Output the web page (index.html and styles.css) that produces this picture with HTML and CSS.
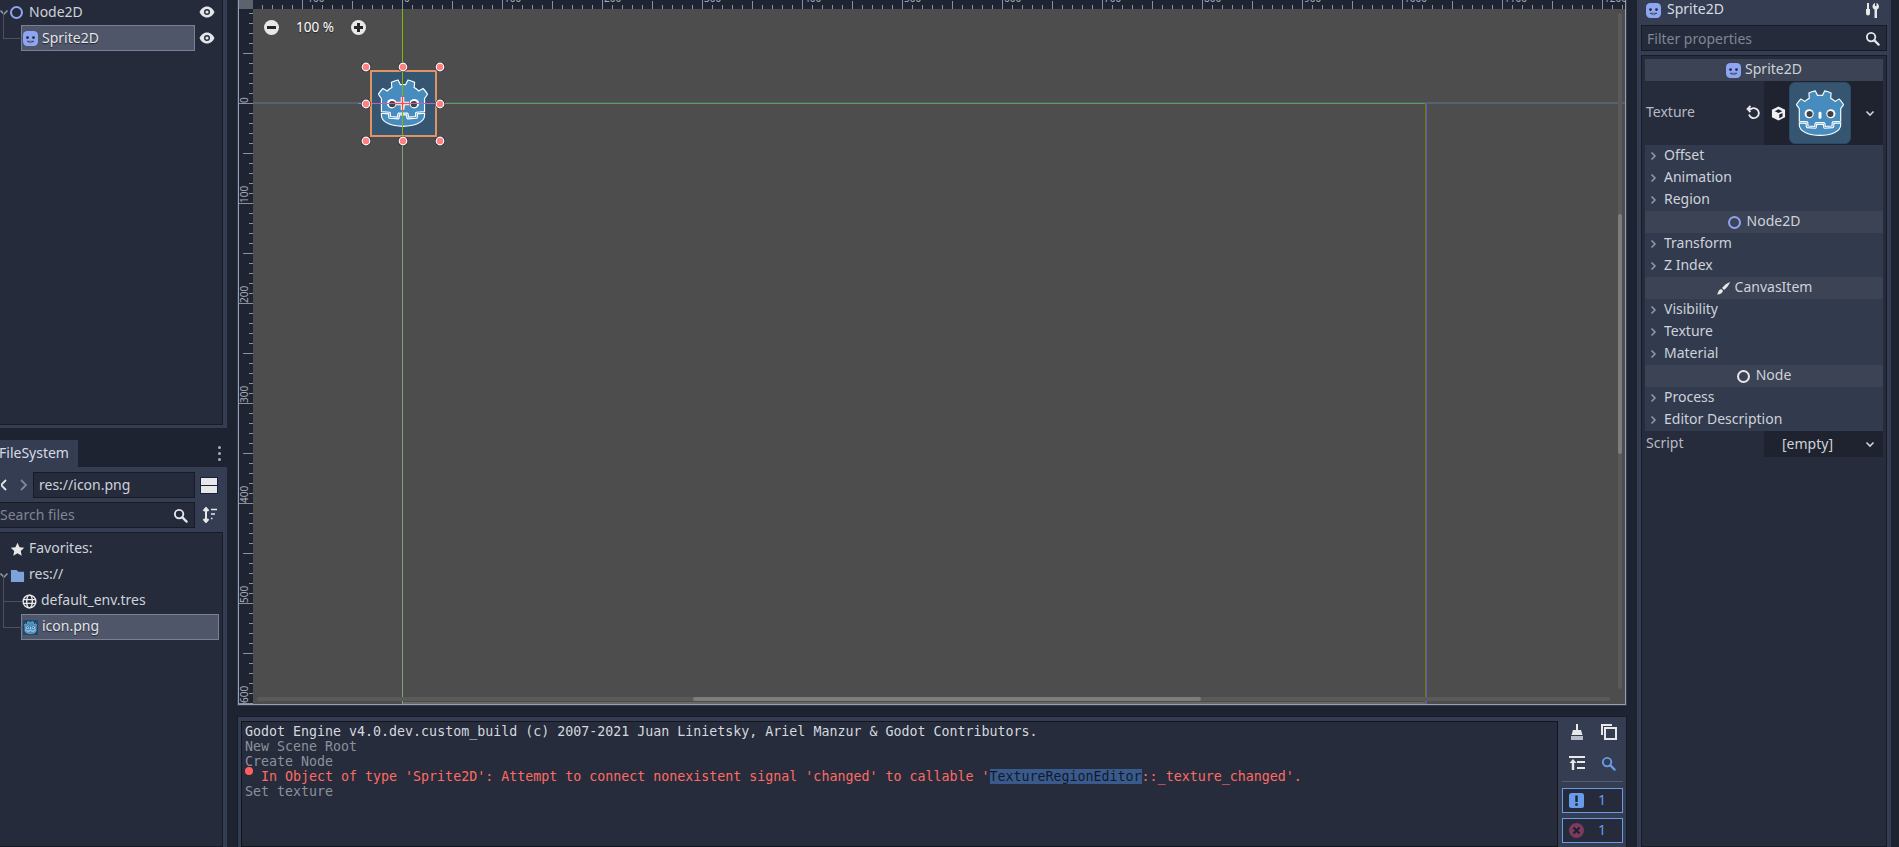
FILE: index.html
```html
<!DOCTYPE html>
<html lang="en">
<head>
    <meta charset="UTF-8">
    <title>Godot Engine</title>
    <link rel="stylesheet" href="styles.css">
</head>
<body>
    <svg class="defs" width="0" height="0">
        <symbol id="godot" viewBox="40 90 944 844">
            <path d="M105 673v33q407 354 814 0v-33z" fill="#478cbf"/>
            <path d="m105 673 152 14q12 1 15 14l4 67 132 10 8-61q2-11 15-15h162q13 4 15 15l8 61 132-10 4-67q3-13 15-14l152-14V427q30-39 56-81-35-59-83-108-43 20-82 47-40-37-88-64 7-51 8-102-59-28-123-42-26 43-46 89-49-7-98 0-20-46-46-89-64 14-123 42 1 51 8 102-48 27-88 64-39-27-82-47-48 49-83 108 26 42 56 81zm0 33v39c0 276 813 276 814 0v-39l-134 12-5 69q-2 10-14 13l-162 11q-12 0-16-11l-10-65H446l-10 65q-4 11-16 11l-162-11q-12-3-14-13l-5-69z" fill="#478cbf" stroke="#fff" stroke-width="22"/>
            <path d="M483 600c0 34 58 34 58 0v-86c0-34-58-34-58 0z" fill="#fff"/>
            <circle cx="725" cy="526" r="90" fill="#fff"/>
            <circle cx="299" cy="526" r="90" fill="#fff"/>
            <circle cx="307" cy="532" r="60" fill="#414042"/>
            <circle cx="717" cy="532" r="60" fill="#414042"/>
        </symbol>
        <symbol id="sprite" viewBox="0 0 16 16">
            <rect width="16" height="16" rx="4.500" fill="#8da5f3"/>
            <circle cx="4.800" cy="7" r="1.500" fill="#252b3b"/>
            <circle cx="11.200" cy="7" r="1.500" fill="#252b3b"/>
            <path d="M4.500 11q3.500 3 7 0z" fill="#fff" stroke="#252b3b" stroke-width=".8"/>
        </symbol>
        <symbol id="eye" viewBox="0 0 16 16">
            <path d="M8 2.500C4.500 2.500 1.800 5 .5 8c1.300 3 4 5.500 7.500 5.500s6.200-2.500 7.500-5.500C14.200 5 11.500 2.500 8 2.500zm0 2.500a3 3 0 1 1 0 6 3 3 0 0 1 0-6z" fill="#e4e6ea"/>
            <circle cx="8" cy="8" r="1.600" fill="#e4e6ea"/>
        </symbol>
        <symbol id="search" viewBox="0 0 16 16">
            <circle cx="6.500" cy="6.500" r="4.500" fill="none" stroke="currentColor" stroke-width="2"/>
            <path d="M10 10l4.500 4.500" stroke="currentColor" stroke-width="2.400" stroke-linecap="round"/>
        </symbol>
        <symbol id="chev-down" viewBox="0 0 12 12">
            <path d="M2.500 4.500L6 8l3.500-3.500" fill="none" stroke="currentColor" stroke-width="1.600"/>
        </symbol>
        <symbol id="chev-right" viewBox="0 0 12 12">
            <path d="M4.500 2.500L8 6l-3.500 3.500" fill="none" stroke="currentColor" stroke-width="1.600"/>
        </symbol>
    </svg>

    <div class="app">
        <!-- left docks -->
        <div class="left-dock">
            <div class="scene-dock">
                <div class="tree scene-tree">
                    <div class="row">
                        <div class="row-main">
                            <svg class="chev" width="12" height="12"><use href="#chev-down"/></svg>
                            <i class="ring ring-blue"></i>
                            <span>Node2D</span>
                        </div>
                        <svg class="eye" width="16" height="16"><use href="#eye"/></svg>
                    </div>
                    <div class="row child">
                        <div class="row-main selected">
                            <svg width="15" height="15"><use href="#sprite"/></svg>
                            <span>Sprite2D</span>
                        </div>
                        <svg class="eye" width="16" height="16"><use href="#eye"/></svg>
                    </div>
                </div>
            </div>

            <div class="tab-bar">
                <div class="tab">FileSystem</div>
                <div class="kebab"><i></i><i></i><i></i></div>
            </div>
            <div class="fs-dock">
                <div class="fs-bar">
                    <svg class="nav" width="32" height="16" viewBox="0 0 32 16">
                        <path d="M5 3L0 8l5 5" fill="none" stroke="#e4e6ea" stroke-width="1.800"/>
                        <path d="M20 3l5 5-5 5" fill="none" stroke="#7f8695" stroke-width="1.800"/>
                    </svg>
                    <div class="field path-field"><span>res://icon.png</span></div>
                    <svg class="tool" width="18" height="17" viewBox="0 0 18 17">
                        <rect width="18" height="17" fill="#14233f"/>
                        <rect x="1" y="1" width="16" height="7" fill="#e8e8e8"/>
                        <rect x="1" y="9" width="16" height="7" fill="#e8e8e8"/>
                    </svg>
                </div>
                <div class="fs-bar">
                    <div class="field search-field">
                        <span>Search files</span>
                        <svg width="15" height="15" class="search-icon"><use href="#search"/></svg>
                    </div>
                    <svg class="tool sort" width="16" height="16" viewBox="0 0 16 16">
                        <path d="M4 1v14M1.500 4L4 1l2.500 3M1.500 12L4 15l2.500-3" fill="none" stroke="#e8e8e8" stroke-width="2"/>
                        <path d="M9 2.500h6M9 7h4M9 11.500h1.500" stroke="#e8e8e8" stroke-width="1.600"/>
                    </svg>
                </div>
                <div class="tree fs-tree">
                    <div class="row">
                        <div class="row-main indent">
                            <svg width="15" height="15" viewBox="0 0 16 16"><path d="M8 .8l2.200 4.700 5 .6-3.700 3.500 1 5L8 12.100l-4.500 2.500 1-5L.8 6.100l5-.6z" fill="#e8e8e8"/></svg>
                            <span>Favorites:</span>
                        </div>
                    </div>
                    <div class="row">
                        <div class="row-main">
                            <svg class="chev" width="12" height="12"><use href="#chev-down"/></svg>
                            <svg width="15" height="15" viewBox="0 0 16 16"><path d="M1 2h6l2 2h6v11H1z" fill="#7ea2dc"/></svg>
                            <span>res://</span>
                        </div>
                    </div>
                    <div class="row child">
                        <div class="row-main wide">
                            <svg width="15" height="15" viewBox="0 0 16 16" fill="none" stroke="#e8e8e8" stroke-width="1.500"><circle cx="8" cy="8" r="6.800"/><ellipse cx="8" cy="8" rx="3" ry="6.800"/><path d="M1.500 6h13M1.500 10h13"/></svg>
                            <span>default_env.tres</span>
                        </div>
                    </div>
                    <div class="row child">
                        <div class="row-main wide selected">
                            <svg width="15" height="15" viewBox="0 0 15 15"><rect width="15" height="15" fill="#1b4a70"/><use href="#godot" x="1" y="1" width="13" height="13"/></svg>
                            <span>icon.png</span>
                        </div>
                    </div>
                </div>
            </div>
        </div>

        <!-- viewport and output -->
        <div class="center">
            <div class="viewport">
                <div class="ruler-top">
                    <div class="ruler-corner"></div>
                    <div class="ruler-h">
                        <span style="left:51px">-100</span>
                        <span style="left:151px">0</span>
                        <span style="left:251px">100</span>
                        <span style="left:351px">200</span>
                        <span style="left:451px">300</span>
                        <span style="left:551px">400</span>
                        <span style="left:651px">500</span>
                        <span style="left:751px">600</span>
                        <span style="left:851px">700</span>
                        <span style="left:951px">800</span>
                        <span style="left:1051px">900</span>
                        <span style="left:1151px">1000</span>
                        <span style="left:1251px">1100</span>
                        <span style="left:1351px">1200</span>
                    </div>
                </div>
                <div class="view-body">
                    <div class="ruler-v">
                        <span style="top:94px">0</span>
                        <span style="top:194px">100</span>
                        <span style="top:294px">200</span>
                        <span style="top:394px">300</span>
                        <span style="top:494px">400</span>
                        <span style="top:594px">500</span>
                        <span style="top:694px">600</span>
                    </div>
                    <div class="canvas">
                        <i class="line h-teal"></i>
                        <i class="line h-red"></i>
                        <i class="line h-green"></i>
                        <i class="line h-violet"></i>
                        <i class="line v-top"></i>
                        <i class="line v-bottom"></i>
                        <i class="line frame-right-a"></i>
                        <i class="line frame-right-b"></i>
                        <i class="line frame-bottom-a"></i>
                        <i class="line frame-bottom-b"></i>

                        <svg class="sprite-sel" width="90" height="90" viewBox="0 0 90 90">
                            <rect x="13.500" y="13.500" width="64" height="64" rx="4" fill="#355570"/>
                            <use href="#godot" x="20" y="21" width="50" height="48"/>
                            <path d="M44.500 0v90" stroke="#8bb300" stroke-width="1"/>
                            <path d="M0 45.500h90" stroke="#c060c0" stroke-width="1"/>
                            <rect x="13" y="13" width="65" height="65" fill="none" stroke="#e09464" stroke-width="2"/>
                            <path d="M38 45.500h13M44.500 39v13" stroke="#fff" stroke-width="3.500"/>
                            <path d="M37 45.500h15M44.500 38v15" stroke="#f0504a" stroke-width="1.500"/>
                            <g fill="#20242f">
                                <circle cx="8" cy="9" r="5"/><circle cx="45" cy="9" r="5"/><circle cx="82" cy="9" r="5"/>
                                <circle cx="8" cy="46" r="5"/><circle cx="82" cy="46" r="5"/>
                                <circle cx="8" cy="83" r="5"/><circle cx="45" cy="83" r="5"/><circle cx="82" cy="83" r="5"/>
                            </g>
                            <g fill="#ff8080" stroke="#fff" stroke-width="1.200">
                                <circle cx="8" cy="9" r="3.800"/><circle cx="45" cy="9" r="3.800"/><circle cx="82" cy="9" r="3.800"/>
                                <circle cx="8" cy="46" r="3.800"/><circle cx="82" cy="46" r="3.800"/>
                                <circle cx="8" cy="83" r="3.800"/><circle cx="45" cy="83" r="3.800"/><circle cx="82" cy="83" r="3.800"/>
                            </g>
                        </svg>

                        <div class="zoom-bar">
                            <span class="zoom-btn minus"></span>
                            <span class="zoom-label">100 %</span>
                            <span class="zoom-btn plus"></span>
                        </div>
                        <i class="scroll-v"><b></b></i>
                        <i class="scroll-h"><b></b></i>
                    </div>
                </div>
            </div>

            <div class="output">
                <div class="log">
                    <div>Godot Engine v4.0.dev.custom_build (c) 2007-2021 Juan Linietsky, Ariel Manzur &amp; Godot Contributors.</div>
                    <div class="dim">New Scene Root</div>
                    <div class="dim">Create Node</div>
                    <div class="err"><i class="err-dot"></i>In Object of type 'Sprite2D': Attempt to connect nonexistent signal 'changed' to callable '<span class="sel">TextureRegionEditor</span>::_texture_changed'.</div>
                    <div class="dim">Set texture</div>
                </div>
                <div class="log-side">
                    <div class="log-tools">
                        <svg width="18" height="18" viewBox="0 0 18 18"><path d="M8 1h2v6H8z" fill="#e8e8e8"/><path d="M5 7h8l1.500 5h-11z" fill="#e8e8e8"/><rect x="3" y="13" width="12" height="4" fill="#b8bcc6"/></svg>
                        <svg width="18" height="18" viewBox="0 0 18 18" fill="none" stroke="#e8e8e8" stroke-width="2"><path d="M2 12V2h10"/><rect x="5" y="5" width="11" height="11"/></svg>
                        <svg width="18" height="18" viewBox="0 0 18 18" fill="#e8e8e8"><rect x="1" y="2" width="16" height="2"/><rect x="9" y="7" width="8" height="2"/><rect x="9" y="13" width="8" height="2"/><path d="M5 5l3.500 4H6.200v7H3.800V9H1.500z"/></svg>
                        <svg width="15" height="15" class="log-search"><use href="#search"/></svg>
                    </div>
                    <div class="side-sep"></div>
                    <div class="count-btn">
                        <svg width="15" height="15" viewBox="0 0 15 15"><rect width="15" height="15" rx="2.500" fill="#699ce8"/><rect x="6.300" y="2.500" width="2.400" height="6.500" fill="#1d2230"/><rect x="6.300" y="10.300" width="2.400" height="2.400" fill="#1d2230"/></svg>
                        <span>1</span>
                    </div>
                    <div class="count-btn">
                        <svg width="15" height="15" viewBox="0 0 15 15"><circle cx="7.500" cy="7.500" r="7.500" fill="#7d3a5c"/><path d="M4.500 4.500l6 6M10.500 4.500l-6 6" stroke="#1d2230" stroke-width="2.200"/></svg>
                        <span>1</span>
                    </div>
                </div>
            </div>
        </div>

        <!-- inspector -->
        <div class="inspector">
            <div class="insp-head">
                <svg width="15" height="15"><use href="#sprite"/></svg>
                <span class="insp-title">Sprite2D</span>
                <svg class="insp-tools" width="14" height="15" viewBox="0 0 14 15" fill="#e8e8e8"><path d="M2 0h2v6h1v4.500a2 2 0 0 1-4 0V6h1z"/><path d="M10 0v3h1.500V0C13 .5 14 2 14 3.500S13 6 12 6.500V15H9.500V6.500C8.500 6 7.500 5 7.500 3.500S8.500.5 10 0z"/></svg>
            </div>
            <div class="field filter-field">
                <span>Filter properties</span>
                <svg width="15" height="15" class="search-icon"><use href="#search"/></svg>
            </div>
            <div class="props">
                <div class="section">
                    <svg width="15" height="15"><use href="#sprite"/></svg><span>Sprite2D</span>
                </div>
                <div class="prop texture-prop">
                    <div class="prop-label">
                        <span>Texture</span>
                        <svg width="16" height="16" viewBox="0 0 16 16" fill="none" stroke="#e8e8e8" stroke-width="1.800"><path d="M4 9.500a5 5 0 1 0 2-5.500H3"/><path d="M5.500 1L2.500 4l3 3"/></svg>
                    </div>
                    <div class="prop-value">
                        <svg width="15" height="15" viewBox="0 0 16 16"><path d="M8 .5l7 3.500v8l-7 3.500L1 12V4z" fill="#f0f0f0"/><path d="M8 3.500L4 5.500l4 2 4-2zM8.800 9v4l3.500-1.800V7.500z" fill="#1f2330"/></svg>
                        <div class="tex-preview"><svg width="48" height="46"><use href="#godot"/></svg></div>
                        <svg class="chev-value" width="12" height="12"><use href="#chev-down"/></svg>
                    </div>
                </div>
                <div class="group"><svg width="12" height="12"><use href="#chev-right"/></svg><span>Offset</span></div>
                <div class="group"><svg width="12" height="12"><use href="#chev-right"/></svg><span>Animation</span></div>
                <div class="group"><svg width="12" height="12"><use href="#chev-right"/></svg><span>Region</span></div>
                <div class="section ring-section"><i class="ring ring-blue"></i><span>Node2D</span></div>
                <div class="group"><svg width="12" height="12"><use href="#chev-right"/></svg><span>Transform</span></div>
                <div class="group"><svg width="12" height="12"><use href="#chev-right"/></svg><span>Z Index</span></div>
                <div class="section">
                    <svg width="15" height="15" viewBox="0 0 16 16" fill="#e8e8e8"><path d="M15 1c-3 1-6 3.500-8.500 6.500l2 2C11.500 7 14 4 15 1z"/><path d="M5.500 8.500L7.500 10.500c-.5 2.500-3 4-6.500 4 1.500-1.500 1-5 4.500-6z"/></svg><span>CanvasItem</span>
                </div>
                <div class="group"><svg width="12" height="12"><use href="#chev-right"/></svg><span>Visibility</span></div>
                <div class="group"><svg width="12" height="12"><use href="#chev-right"/></svg><span>Texture</span></div>
                <div class="group"><svg width="12" height="12"><use href="#chev-right"/></svg><span>Material</span></div>
                <div class="section ring-section"><i class="ring"></i><span>Node</span></div>
                <div class="group"><svg width="12" height="12"><use href="#chev-right"/></svg><span>Process</span></div>
                <div class="group"><svg width="12" height="12"><use href="#chev-right"/></svg><span>Editor Description</span></div>
                <div class="prop script-prop">
                    <div class="prop-label"><span>Script</span></div>
                    <div class="prop-value">
                        <span class="empty">[empty]</span>
                        <svg class="chev-value" width="12" height="12"><use href="#chev-down"/></svg>
                    </div>
                </div>
            </div>
        </div>
    </div>
</body>
</html>
```
FILE: styles.css
```css
* {
    box-sizing: border-box;
}

body {
    margin: 0;
    height: 847px;
    overflow: hidden;
    background: #1e2331;
    color: #ced2da;
    font-family: "Noto Sans", sans-serif;
    font-size: 14px;
}

.defs {
    position: absolute;
}

svg {
    display: block;
    flex: none;
}

.row-main span,
.section span,
.group span,
.prop span {
    margin-bottom: 3px;
}

.field span {
    margin-bottom: 2px;
}

.scene-tree .row-main span {
    margin-bottom: 2px;
}

.app {
    display: flex;
    height: 847px;
    overflow: hidden;
}

/* left docks */
.left-dock {
    width: 227px;
    flex: none;
    display: flex;
    flex-direction: column;
}

.scene-dock {
    height: 428px;
    background: #343d52;
    padding-right: 4px;
    padding-bottom: 2px;
}

.tree {
    background: #252b3b;
    border: 1px solid #171b26;
    border-left: none;
}

.scene-tree {
    height: 100%;
    border-top: none;
    margin-top: -1px;
}

.row {
    position: relative;
    display: flex;
    align-items: center;
    height: 26px;
}

.row-main {
    display: flex;
    align-items: center;
    gap: 4px;
    width: 195px;
    height: 26px;
    color: #ced2da;
}

.row-main .chev {
    margin-left: -2px;
    margin-right: -4px;
    color: #8d93a1;
}

.row-main .ring {
    margin-right: 2px;
}

.row-main.indent {
    padding-left: 10px;
}

.child {
    margin-left: 21px;
}

.child::before {
    content: "";
    position: absolute;
    left: -18px;
    top: -13px;
    width: 18px;
    height: 26px;
    border-left: 1px solid #4a5163;
    border-bottom: 1px solid #4a5163;
}

.child .row-main {
    width: 174px;
    padding-left: 1px;
}

.child .row-main.wide {
    width: 198px;
}

.selected {
    background: #50566a;
    border: 1px solid #7a8194;
    text-shadow: 0 1px 1px #20242f;
    color: #e4e6ea;
}

.eye {
    margin-left: 4px;
}

.ring {
    display: block;
    width: 13px;
    height: 13px;
    border: 2px solid #e8e8e8;
    border-radius: 50%;
    flex: none;
}

.ring-blue {
    border-color: #8da5f3;
}

.tab-bar {
    height: 39px;
    padding-top: 12px;
    display: flex;
    justify-content: space-between;
}

.tab {
    width: 78px;
    height: 27px;
    background: #343d52;
    line-height: 25px;
    text-indent: -1px;
    color: #d8dbe2;
}

.kebab {
    width: 15px;
    display: flex;
    flex-direction: column;
    align-items: center;
    gap: 3px;
    padding-top: 6px;
}

.kebab i {
    width: 3px;
    height: 3px;
    border-radius: 50%;
    background: #a9aeb9;
}

.fs-dock {
    flex: 1;
    display: flex;
    flex-direction: column;
    gap: 4px;
    background: #343d52;
    padding-top: 5px;
    padding-right: 4px;
    min-height: 0;
}

.fs-bar {
    display: flex;
    align-items: center;
    height: 26px;
}

.nav {
    margin-left: 1px;
}

.field {
    display: flex;
    align-items: center;
    justify-content: space-between;
    height: 26px;
    background: #252b3b;
    border: 1px solid #171b26;
    color: #ced2da;
}

.path-field {
    width: 162px;
    padding-left: 5px;
}

.search-field {
    width: 195px;
    border-left: none;
    color: #7f8695;
    padding-right: 6px;
}

.search-icon {
    color: #e4e6ea;
}

.tool {
    margin-left: 5px;
}

.tool.sort {
    margin-left: 7px;
}

.fs-tree {
    flex: 1;
    padding-top: 3px;
}

.fs-dock .row-main {
    width: auto;
}

/* viewport */
.center {
    width: 1389px;
    flex: none;
    margin-left: 11px;
    display: flex;
    flex-direction: column;
}

.viewport {
    width: 1388px;
    height: 705px;
    flex: none;
    border: 1px solid #9a9fad;
    border-top: none;
    box-shadow: 0 0 0 1px #2f384c;
    background: #4d4d4d;
    display: flex;
    flex-direction: column;
}

.ruler-top {
    display: flex;
    height: 9px;
    flex: none;
}

.ruler-corner {
    width: 14px;
    background: #5d626f;
}

.ruler-h {
    position: relative;
    flex: 1;
    overflow: hidden;
    background-color: #1f2433;
    background-image:
        linear-gradient(90deg, #8a90a0 1px, transparent 1px),
        linear-gradient(90deg, #8a90a0 1px, transparent 1px),
        linear-gradient(90deg, #8a90a0 1px, transparent 1px);
    background-size: 100px 100%, 50px 8px, 10px 4px;
    background-position: 49px 0, 49px 100%, 9px 100%;
    background-repeat: repeat-x;
}

.ruler-h span {
    position: absolute;
    top: -9px;
    font-size: 10px;
    line-height: 14px;
    color: #a8adba;
}

.view-body {
    flex: 1;
    display: flex;
    min-height: 0;
}

.ruler-v {
    position: relative;
    width: 14px;
    overflow: hidden;
    background-color: #1f2433;
    background-image:
        linear-gradient(#8a90a0 1px, transparent 1px),
        linear-gradient(#8a90a0 1px, transparent 1px),
        linear-gradient(#8a90a0 1px, transparent 1px);
    background-size: 100% 100px, 10px 50px, 4px 10px;
    background-position: 0 94px, 100% 44px, 100% 4px;
    background-repeat: repeat-y;
}

.ruler-v span {
    position: absolute;
    left: 0;
    font-size: 10px;
    line-height: 11px;
    color: #a8adba;
    writing-mode: vertical-rl;
    transform: rotate(180deg) translateY(100%);
    transform-origin: center;
}

.canvas {
    position: relative;
    flex: 1;
    overflow: hidden;
    background: #4d4d4d;
}

.line {
    position: absolute;
    display: block;
}

.h-teal { left: 0; right: 0; top: 93px; height: 1px; background: #1f7a80; }
.h-red { left: 0; right: 0; top: 94px; height: 1px; background: #8a4a60; }
.h-green { left: 149px; width: 1023px; top: 93px; height: 1px; background: #1c8a1c; }
.h-violet { left: 149px; width: 1023px; top: 94px; height: 1px; background: #93749f; }
.v-top { left: 149px; top: -9px; height: 103px; width: 1px; background: #7fb800; }
.v-bottom { left: 149px; top: 94px; bottom: 0; width: 1px; background: #7ba47e; }
.frame-right-a { left: 1172px; top: 95px; bottom: 2px; width: 1px; background: #767600; }
.frame-right-b { left: 1173px; top: 94px; bottom: 0; width: 1px; background: #5c5cc4; }
.frame-bottom-a { left: 150px; width: 1022px; bottom: 1px; height: 1px; background: #767600; }
.frame-bottom-b { left: 150px; width: 1023px; bottom: 0; height: 1px; background: #5c5cc4; }

.sprite-sel {
    position: absolute;
    left: 105px;
    top: 49px;
}

.zoom-bar {
    position: absolute;
    left: 11px;
    top: 10px;
    display: flex;
    align-items: center;
    height: 16px;
}

.zoom-label {
    width: 72px;
    text-align: center;
    font-size: 13.500px;
    color: #fff;
    text-shadow: 0 1px 1px #222;
}

.zoom-btn {
    position: relative;
    width: 15px;
    height: 15px;
    border-radius: 50%;
    background: #e8e8e8;
}

.zoom-btn::before,
.plus::after {
    content: "";
    position: absolute;
    left: 3px;
    top: 6px;
    width: 9px;
    height: 3px;
    background: #262626;
}

.plus::after {
    left: 6px;
    top: 3px;
    width: 3px;
    height: 9px;
}

.scroll-v {
    position: absolute;
    right: 3px;
    top: 4px;
    bottom: 15px;
    width: 4px;
    border-radius: 2px;
    background: #5a5a5a;
}

.scroll-v b {
    display: block;
    margin-top: 201px;
    height: 240px;
    border-radius: 2px;
    background: #7d7d7d;
}

.scroll-h {
    position: absolute;
    left: 4px;
    right: 15px;
    bottom: 3px;
    height: 4px;
    border-radius: 2px;
    background: #5a5a5a;
}

.scroll-h b {
    display: block;
    margin-left: 436px;
    width: 508px;
    height: 4px;
    border-radius: 2px;
    background: #7d7d7d;
}

/* output */
.output {
    flex: 1;
    margin-top: 11px;
    margin-left: -1px;
    display: flex;
    background: #343d52;
    border: 1px solid #171b26;
    border-bottom: none;
    padding: 4px 0 0 3px;
    min-height: 0;
}

.log {
    width: 1317px;
    background: #262c3b;
    border: 1px solid #12151e;
    padding: 2px 0 0 3px;
    font-family: "DejaVu Sans Mono", monospace;
    font-size: 13.300px;
    line-height: 15px;
    color: #d5d8df;
    white-space: nowrap;
}

.dim {
    color: #8d919b;
}

.err {
    position: relative;
    color: #ff6b63;
    padding-left: 16px;
}

.err-dot {
    position: absolute;
    left: 0;
    top: -2px;
    width: 8px;
    height: 8px;
    border-radius: 50%;
    background: #ff5f5f;
}

.sel {
    background: #3b5a8c;
    color: #101a2c;
}

.log-side {
    flex: 1;
    padding: 2px 3px 0 4px;
}

.log-tools {
    display: grid;
    grid-template-columns: 18px 18px;
    justify-content: center;
    column-gap: 14px;
    row-gap: 13px;
}

.log-search {
    color: #699ce8;
    justify-self: center;
    align-self: center;
}

.side-sep {
    height: 1px;
    background: #555d70;
    margin: 9px 0 6px;
}

.count-btn {
    display: flex;
    align-items: center;
    gap: 14px;
    height: 25px;
    margin-bottom: 5px;
    padding-left: 6px;
    background: #252b3b;
    border: 1px solid #699ce8;
    color: #699ce8;
}

.count-btn span {
    margin-bottom: 2px;
}

/* inspector */
.inspector {
    width: 254px;
    flex: none;
    margin-left: 10px;
    height: 847px;
    background: #343d52;
    padding: 0 4px;
    display: flex;
    flex-direction: column;
}

.insp-head {
    display: flex;
    align-items: center;
    gap: 6px;
    height: 20px;
    padding-left: 5px;
    margin-bottom: 5px;
    flex: none;
}

.insp-head span {
    margin-bottom: 4px;
}

.insp-title {
    color: #d8dbe2;
}

.insp-tools {
    margin-left: auto;
    margin-right: 8px;
}

.filter-field {
    flex: none;
    padding: 0 6px 0 5px;
    color: #7f8695;
}

.filter-field span {
    margin-bottom: 0;
}

.props {
    flex: 1;
    margin-top: 4px;
    background: #262c3b;
    border: 1px solid #171b26;
    padding: 3px 3px 0;
}

.section {
    display: flex;
    align-items: center;
    justify-content: center;
    gap: 4px;
    height: 22px;
    background: #3c4354;
    color: #ced2da;
}

.ring-section {
    gap: 6px;
}

.group {
    display: flex;
    align-items: center;
    gap: 5px;
    height: 22px;
    padding-left: 2px;
    background: #323a4d;
    color: #ced2da;
}

.group svg {
    color: #9096a3;
}

.prop {
    display: flex;
}

.prop-label {
    display: flex;
    align-items: center;
    justify-content: space-between;
    width: 119px;
    padding: 0 3px 0 1px;
    color: #b6bac4;
}

.prop-value {
    flex: 1;
    display: flex;
    align-items: center;
    background: #1f2330;
}

.texture-prop {
    height: 64px;
}

.texture-prop .prop-value {
    padding-left: 7px;
}

.tex-preview {
    width: 62px;
    height: 62px;
    margin-left: 3px;
    border-radius: 6px;
    background: #355570;
    border: 1px solid #2b4a66;
    display: flex;
    align-items: center;
    justify-content: center;
}

.chev-value {
    margin-left: auto;
    margin-right: 7px;
    color: #ced2da;
}

.script-prop {
    height: 26px;
}

.script-prop .prop-label {
    align-items: flex-start;
    padding-top: 2px;
}

.script-prop .prop-value span {
    margin-bottom: 1px;
}

.empty {
    margin-left: 18px;
}
```
